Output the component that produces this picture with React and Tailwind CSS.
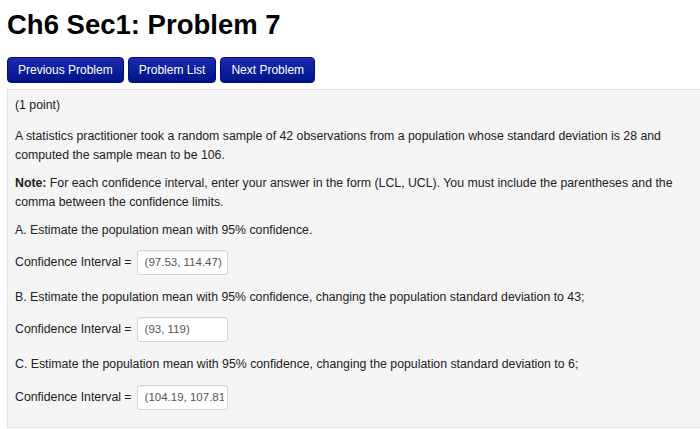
import React from "react";

const font = { fontFamily: '"Liberation Sans", Arial, Helvetica, sans-serif' };

const AnswerRow = ({ value }) => (
  <div className="flex items-center">
    <span>Confidence Interval =</span>
    <div className="ml-[5px] w-[91px] h-[25px] flex items-center pl-[7px] pr-[3px] bg-white border border-[#d4d4d4] rounded-[3px] shadow-[inset_0_1px_1px_rgba(0,0,0,0.06)] text-[11.5px] text-[#555]">
      <div className="flex-1 overflow-hidden whitespace-nowrap">{value}</div>
    </div>
  </div>
);

export default function App() {
  return (
    <div className="w-[700px] h-[429px] overflow-hidden bg-white text-[#222]" style={font}>
      <h1 className="ml-[7px] pt-[8px] text-[27.5px] leading-[34px] font-bold text-black">
        Ch6 Sec1: Problem 7
      </h1>

      {/* Nav buttons */}
      <div className="flex gap-[4px] ml-[7px] mt-[15px]">
        {["Previous Problem", "Problem List", "Next Problem"].map((label) => (
          <button
            key={label}
            className="h-[26px] px-[10px] rounded-[4px] text-white text-[12px] bg-gradient-to-b from-[#1a2bb0] to-[#00128a] border border-[#000f70]"
          >
            {label}
          </button>
        ))}
      </div>

      {/* Problem panel */}
      <div className="ml-[7px] mt-[6px] w-[720px] h-[339px] bg-[#f5f5f5] border border-[#e3e3e3] pl-[7px] pt-[6px] text-[12.3px] leading-[19px]">
        <p>(1 point)</p>
        <p className="mt-[12px]">
          A statistics practitioner took a random sample of 42 observations from a population whose standard deviation is 28 and
          <br />
          computed the sample mean to be 106.
        </p>
        <p className="mt-[9px]">
          <b>Note:</b> For each confidence interval, enter your answer in the form (LCL, UCL). You must include the parentheses and the
          <br />
          comma between the confidence limits.
        </p>
        <p className="mt-[9px]">A. Estimate the population mean with 95% confidence.</p>
        <div className="mt-[10px]">
          <AnswerRow value="(97.53, 114.47)" />
        </div>
        <p className="mt-[13px]">
          B. Estimate the population mean with 95% confidence, changing the population standard deviation to 43;
        </p>
        <div className="mt-[10px]">
          <AnswerRow value="(93, 119)" />
        </div>
        <p className="mt-[13px]">
          C. Estimate the population mean with 95% confidence, changing the population standard deviation to 6;
        </p>
        <div className="mt-[11px]">
          <AnswerRow value="(104.19, 107.81)" />
        </div>
      </div>
    </div>
  );
}
